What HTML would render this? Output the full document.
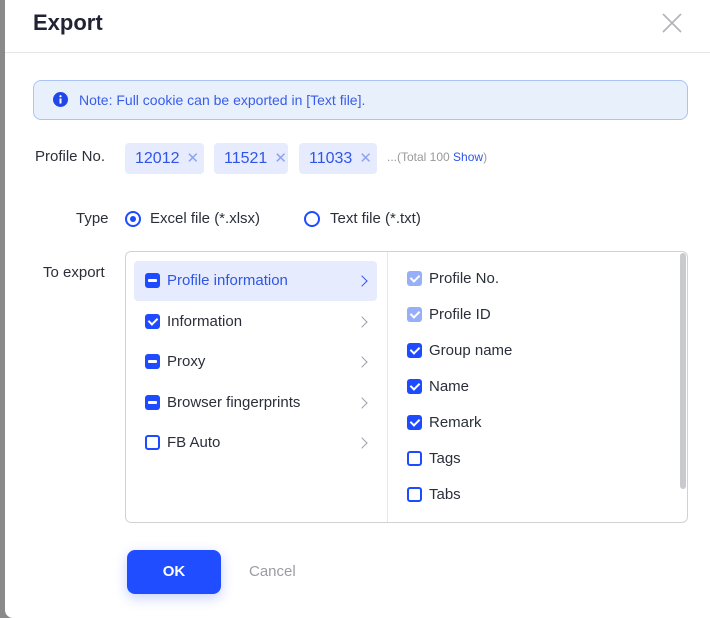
<!DOCTYPE html>
<html><head><meta charset="utf-8"><style>
*{margin:0;padding:0;box-sizing:border-box}
body{width:710px;height:618px;background:#8a8a8a;position:relative;overflow:hidden;font-family:"Liberation Sans",sans-serif;}
.modal{position:absolute;left:5px;top:0;width:705px;height:618px;background:#fff;border-bottom-left-radius:8px}
.a{position:absolute;white-space:nowrap}
.lbl{font-size:15px;color:#2b2f3a}
.tag{position:absolute;top:143px;height:31px;background:#e6ecfd;border-radius:4px;color:#2f55e8;font-size:16px;line-height:31px;padding-left:10px}
.tag span{color:#8ea3f0;font-size:15px;margin-left:7px}
.cb{position:absolute;width:15px;height:15px;border-radius:3px;background:#1e4bff}
.cb.off{background:#fff;border:2px solid #1e4bff}
.cb.light{background:#97aef9}
.cb.minus::after{content:"";position:absolute;left:3px;top:6px;width:9px;height:3px;background:#fff;border-radius:1px}
.cb.chk::after{content:"";position:absolute;left:5px;top:2px;width:4px;height:7px;border:solid #fff;border-width:0 2px 2px 0;transform:rotate(45deg)}
.it{position:absolute;font-size:15px;color:#2b2f3a}
.chev{position:absolute;width:8px;height:8px;border:solid #9a9ea8;border-width:1.6px 1.6px 0 0;transform:rotate(45deg)}
</style></head><body>
<div class="modal">
<div class="a" style="left:28px;top:10px;font-size:22px;font-weight:bold;color:#1f2333">Export</div>
<svg class="a" style="left:657px;top:13px" width="20" height="20"><path d="M1 1L19 19M19 1L1 19" stroke="#b0b3b8" stroke-width="1.6"/></svg>
<div class="a" style="left:0;top:52px;width:705px;height:1px;background:#e6e7ea"></div>
<div class="a" style="left:28px;top:80px;width:655px;height:40px;background:#e8f0fb;border:1px solid #abc3f5;border-radius:8px"></div>
<svg class="a" style="left:48px;top:92px" width="15" height="15"><circle cx="7.5" cy="7.5" r="7.5" fill="#2147ea"/><rect x="6.5" y="6.5" width="2" height="5" fill="#fff"/><circle cx="7.5" cy="4.2" r="1.1" fill="#fff"/></svg>
<div class="a" style="left:74px;top:92px;font-size:14px;color:#3a5ce8">Note: Full cookie can be exported in [Text file].</div>
<div class="a lbl" style="left:30px;top:148px">Profile No.</div>
<div class="tag" style="left:120px;width:79px">12012<span>✕</span></div>
<div class="tag" style="left:209px;width:74px">11521<span>✕</span></div>
<div class="tag" style="left:294px;width:78px">11033<span>✕</span></div>
<div class="a" style="left:382px;top:150px;font-size:12px;color:#999">...(Total 100 <span style="color:#2f55e8">Show</span>)</div>
<div class="a lbl" style="left:71px;top:210px">Type</div>
<div class="a" style="left:120px;top:211px;width:16px;height:16px;border:2px solid #1e4bff;border-radius:50%"><div style="position:absolute;left:3px;top:3px;width:6px;height:6px;border-radius:50%;background:#1e4bff"></div></div>
<div class="a lbl" style="left:145px;top:210px">Excel file (*.xlsx)</div>
<div class="a" style="left:299px;top:211px;width:16px;height:16px;border:2px solid #1e4bff;border-radius:50%"></div>
<div class="a lbl" style="left:325px;top:210px">Text file (*.txt)</div>
<div class="a lbl" style="left:38px;top:264px">To export</div>
<div class="a" style="left:120px;top:251px;width:563px;height:272px;border:1px solid #d0d2d6;border-radius:6px"></div>
<div class="a" style="left:382px;top:252px;width:1px;height:270px;background:#e6e7ea"></div>
<div class="a" style="left:675px;top:253px;width:6px;height:236px;background:#c9cacd;border-radius:3px"></div>
<div class="a" style="left:129px;top:261px;width:243px;height:40px;background:#e6ecfd;border-radius:4px"></div>
<div class="cb minus" style="left:140px;top:273px"></div><div class="it" style="left:162px;top:272px;color:#2f55e8">Profile information</div><div class="chev" style="left:353px;top:277px;border-color:#2f55e8"></div>
<div class="cb chk" style="left:140px;top:314px"></div><div class="it" style="left:162px;top:313px">Information</div><div class="chev" style="left:353px;top:318px"></div>
<div class="cb minus" style="left:140px;top:354px"></div><div class="it" style="left:162px;top:353px">Proxy</div><div class="chev" style="left:353px;top:358px"></div>
<div class="cb minus" style="left:140px;top:395px"></div><div class="it" style="left:162px;top:394px">Browser fingerprints</div><div class="chev" style="left:353px;top:399px"></div>
<div class="cb off" style="left:140px;top:435px"></div><div class="it" style="left:162px;top:434px">FB Auto</div><div class="chev" style="left:353px;top:439px"></div>
<div class="cb chk light" style="left:402px;top:271px"></div><div class="it" style="left:424px;top:270px">Profile No.</div>
<div class="cb chk light" style="left:402px;top:307px"></div><div class="it" style="left:424px;top:306px">Profile ID</div>
<div class="cb chk" style="left:402px;top:343px"></div><div class="it" style="left:424px;top:342px">Group name</div>
<div class="cb chk" style="left:402px;top:379px"></div><div class="it" style="left:424px;top:378px">Name</div>
<div class="cb chk" style="left:402px;top:415px"></div><div class="it" style="left:424px;top:414px">Remark</div>
<div class="cb off" style="left:402px;top:451px"></div><div class="it" style="left:424px;top:450px">Tags</div>
<div class="cb off" style="left:402px;top:487px"></div><div class="it" style="left:424px;top:486px">Tabs</div>
<div class="a" style="left:122px;top:550px;width:94px;height:44px;background:#1f4dff;border-radius:8px;box-shadow:0 4px 12px rgba(31,77,255,.25);color:#fff;font-size:15px;font-weight:bold;text-align:center;line-height:44px">OK</div>
<div class="a" style="left:244px;top:563px;font-size:15px;color:#9a9ca3">Cancel</div>
</div>
</body></html>
